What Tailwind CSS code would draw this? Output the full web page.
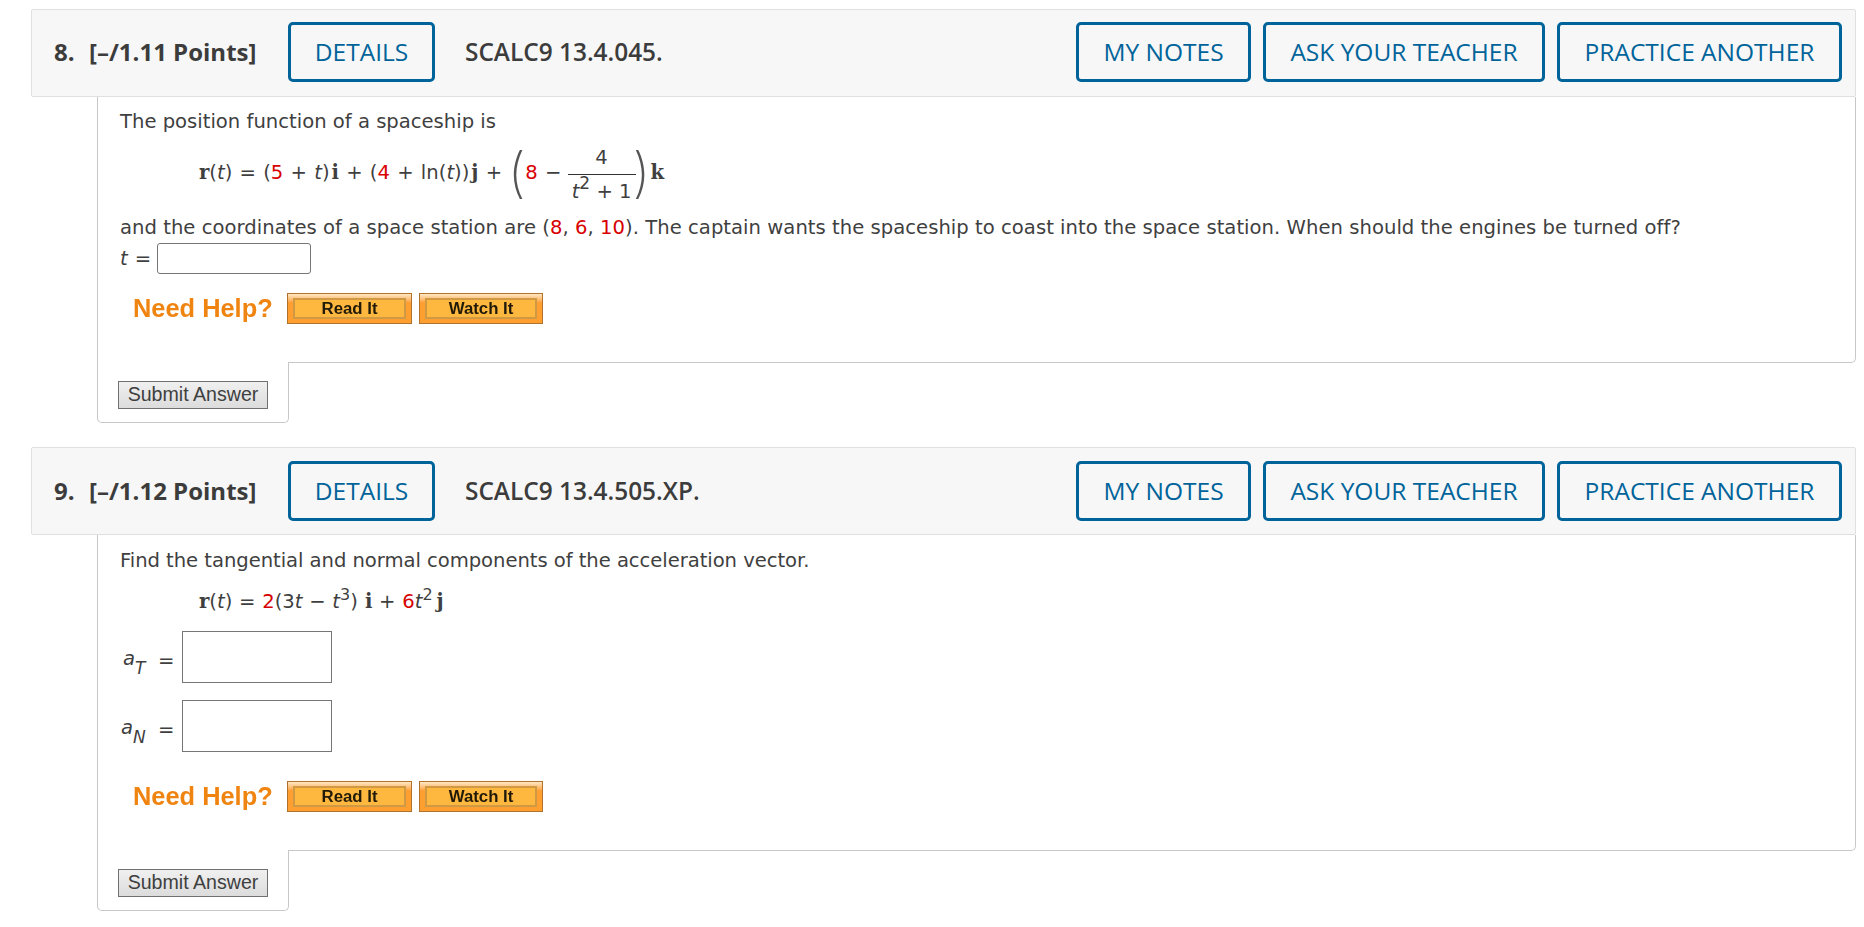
<!DOCTYPE html>
<html lang="en"><head><meta charset="utf-8"><title>Questions</title>
<script src="https://cdn.jsdelivr.net/npm/@tailwindcss/browser@4"></script></head>
<body class="bg-white text-[#3f3f3f] font-['DejaVu_Sans',sans-serif] text-[19.6px]">
<main class="pl-[31px] pr-[8px] pt-[9px] flex flex-col gap-[24px]">

<section>
<header class="h-[88px] bg-[#f7f7f7] border border-[#e0e0e0] rounded-[2px] flex items-center pl-[22px] pr-[13px] pb-[2px] font-['Open_Sans',sans-serif] text-[#3c3c3c]">
<span class="w-[35px] font-bold text-[24px]">8.</span><span class="w-[199px] font-bold text-[24px]">[–/1.11 Points]</span>
<button class="w-[147px] h-[60px] border-[3px] border-[#00649a] rounded-[5px] text-[#00649a] font-medium text-[24.5px]">DETAILS</button>
<span class="ml-[30px] font-semibold text-[24.4px]">SCALC9 13.4.045.</span>
<div class="ml-auto flex gap-[12px] font-medium text-[24.5px] text-[#00649a]">
<button class="w-[175px] h-[60px] border-[3px] border-[#00649a] rounded-[5px]">MY NOTES</button>
<button class="w-[282px] h-[60px] border-[3px] border-[#00649a] rounded-[5px]">ASK YOUR TEACHER</button>
<button class="w-[285px] h-[60px] border-[3px] border-[#00649a] rounded-[5px]">PRACTICE ANOTHER</button>
</div>
</header>
<div class="ml-[66px] h-[266px] border-l border-r border-b border-[#c8c8c8] rounded-br-[5px] pl-[22px]">
<p class="pt-[12px] leading-[26px]">The position function of a spaceship is</p>
<div class="pl-[79px] mt-[5px] h-[66px] flex items-center whitespace-pre [word-spacing:1px]"><b class="font-['DejaVu_Serif',serif]">r</b>(<i>t</i>) = (<span class="text-[#d80000]">5</span> + <i>t</i>)<b class="font-['DejaVu_Serif',serif] ml-[2px]">i</b> + (<span class="text-[#d80000]">4</span> + ln(<i>t</i>))<b class="font-['DejaVu_Serif',serif] ml-[2px]">j</b> + <span class="-ml-[1px] w-[17px] flex justify-center text-[54px] font-['Inter',sans-serif] font-extralight text-[#555] leading-none">(</span><span class="text-[#d80000]">8</span> − <span class="relative top-[2px] inline-flex flex-col items-center -ml-[1px] [word-spacing:0]"><span class="border-b border-[#333] w-full text-center leading-[32px]">4</span><span class="leading-[34px] px-[4px]"><i>t</i><sup class="text-[17px]">2</sup> + 1</span></span><span class="w-[12px] flex justify-center text-[54px] font-['Inter',sans-serif] font-extralight text-[#555] leading-none">)</span><b class="font-['DejaVu_Serif',serif] ml-[3px]">k</b></div>
<p class="mt-[9px] leading-[26px] tracking-[0.03px]">and the coordinates of a space station are (<span class="text-[#d80000]">8</span>, <span class="text-[#d80000]">6</span>, <span class="text-[#d80000]">10</span>). The captain wants the spaceship to coast into the space station. When should the engines be turned off?</p>
<div class="flex items-center mt-[2px] h-[31px]"><span class="w-[37px]"><i>t</i><span class="ml-[7px]">=</span></span><div class="w-[154px] h-[31px] border border-[#767676] rounded-[3px]"></div></div>
<div class="flex items-center mt-[19px] ml-[13px] h-[31px]">
<span class="w-[154px] font-['Liberation_Sans',sans-serif] font-bold text-[25.4px] text-[#f08410] blur-[0.4px]">Need Help?</span>
<button class="w-[125px] h-[31px] border border-[#b0722c] bg-linear-to-b from-[#ffe8c4] via-[#ff9f30] via-30% to-[#ff9f30] pt-[4px] pb-[4px] px-[5px]"><span class="flex h-full items-center justify-center border-2 border-[#d09a45] bg-[#ffb83f] font-['Liberation_Sans',sans-serif] font-bold text-[16.8px] text-[#221a08] blur-[0.4px]">Read It</span></button>
<button class="ml-[7px] w-[124px] h-[31px] border border-[#b0722c] bg-linear-to-b from-[#ffe8c4] via-[#ff9f30] via-30% to-[#ff9f30] pt-[4px] pb-[4px] px-[5px]"><span class="flex h-full items-center justify-center border-2 border-[#d09a45] bg-[#ffb83f] font-['Liberation_Sans',sans-serif] font-bold text-[16.8px] text-[#221a08] blur-[0.4px]">Watch It</span></button>
</div>
</div>
<div class="relative ml-[66px] -mt-px w-[192px] h-[61px] bg-white border-l border-r border-b border-[#c8c8c8] rounded-b-[5px] pt-[18px] pl-[20px]">
<button class="w-[150px] h-[28px] border border-[#707070] bg-linear-to-b from-[#f0f0f0] to-[#dcdcdc] font-['Liberation_Sans',sans-serif] text-[19.6px] leading-none">Submit Answer</button>
</div>
</section>

<section>
<header class="h-[88px] bg-[#f7f7f7] border border-[#e0e0e0] rounded-[2px] flex items-center pl-[22px] pr-[13px] font-['Open_Sans',sans-serif] text-[#3c3c3c]">
<span class="w-[35px] font-bold text-[24px]">9.</span><span class="w-[199px] font-bold text-[24px]">[–/1.12 Points]</span>
<button class="w-[147px] h-[60px] border-[3px] border-[#00649a] rounded-[5px] text-[#00649a] font-medium text-[24.5px]">DETAILS</button>
<span class="ml-[30px] font-semibold text-[24.4px]">SCALC9 13.4.505.XP.</span>
<div class="ml-auto flex gap-[12px] font-medium text-[24.5px] text-[#00649a]">
<button class="w-[175px] h-[60px] border-[3px] border-[#00649a] rounded-[5px]">MY NOTES</button>
<button class="w-[282px] h-[60px] border-[3px] border-[#00649a] rounded-[5px]">ASK YOUR TEACHER</button>
<button class="w-[285px] h-[60px] border-[3px] border-[#00649a] rounded-[5px]">PRACTICE ANOTHER</button>
</div>
</header>
<div class="ml-[66px] h-[316px] border-l border-r border-b border-[#c8c8c8] rounded-br-[5px] pl-[22px]">
<p class="pt-[13px] leading-[26px] tracking-[-0.05px]">Find the tangential and normal components of the acceleration vector.</p>
<div class="pl-[79px] mt-[15px] leading-[26px] whitespace-pre [word-spacing:0.5px]"><b class="font-['DejaVu_Serif',serif]">r</b>(<i>t</i>) = <span class="text-[#d80000]">2</span>(3<i>t</i> − <i>t</i><sup class="text-[16px]">3</sup>)<b class="font-['DejaVu_Serif',serif] ml-[7px]">i</b> + <span class="text-[#d80000]">6</span><i>t</i><sup class="text-[16px]">2</sup><b class="font-['DejaVu_Serif',serif] ml-[4px]">j</b></div>
<div class="flex items-center mt-[16px] h-[52px]"><span class="relative top-[2px] w-[38px] pl-[3px]"><i>a</i><sub class="text-[17px] italic -bottom-[9px]">T</sub></span><span class="relative top-[4px] w-[24px]">=</span><div class="w-[150px] h-[52px] border border-[#767676]"></div></div>
<div class="flex items-center mt-[17px] h-[52px]"><span class="relative top-[2px] w-[38px] pl-[1px]"><i>a</i><sub class="text-[17px] italic -bottom-[9px]">N</sub></span><span class="relative top-[4px] w-[24px]">=</span><div class="w-[150px] h-[52px] border border-[#767676]"></div></div>
<div class="flex items-center mt-[29px] ml-[13px] h-[31px]">
<span class="w-[154px] font-['Liberation_Sans',sans-serif] font-bold text-[25.4px] text-[#f08410] blur-[0.4px]">Need Help?</span>
<button class="w-[125px] h-[31px] border border-[#b0722c] bg-linear-to-b from-[#ffe8c4] via-[#ff9f30] via-30% to-[#ff9f30] pt-[4px] pb-[4px] px-[5px]"><span class="flex h-full items-center justify-center border-2 border-[#d09a45] bg-[#ffb83f] font-['Liberation_Sans',sans-serif] font-bold text-[16.8px] text-[#221a08] blur-[0.4px]">Read It</span></button>
<button class="ml-[7px] w-[124px] h-[31px] border border-[#b0722c] bg-linear-to-b from-[#ffe8c4] via-[#ff9f30] via-30% to-[#ff9f30] pt-[4px] pb-[4px] px-[5px]"><span class="flex h-full items-center justify-center border-2 border-[#d09a45] bg-[#ffb83f] font-['Liberation_Sans',sans-serif] font-bold text-[16.8px] text-[#221a08] blur-[0.4px]">Watch It</span></button>
</div>
</div>
<div class="relative ml-[66px] -mt-px w-[192px] h-[61px] bg-white border-l border-r border-b border-[#c8c8c8] rounded-b-[5px] pt-[18px] pl-[20px]">
<button class="w-[150px] h-[28px] border border-[#707070] bg-linear-to-b from-[#f0f0f0] to-[#dcdcdc] font-['Liberation_Sans',sans-serif] text-[19.6px] leading-none">Submit Answer</button>
</div>
</section>
</main>
</body></html>
